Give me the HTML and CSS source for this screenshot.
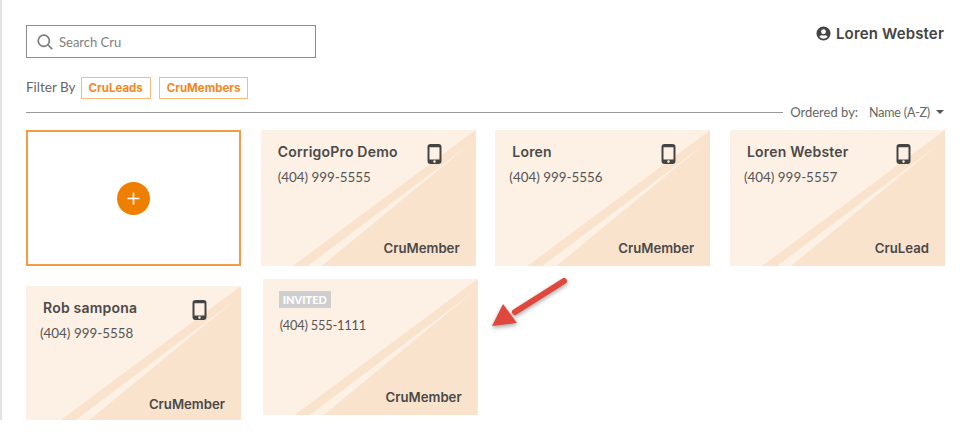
FILE: index.html
```html
<!DOCTYPE html>
<html lang="en">
<head>
    <meta charset="UTF-8">
    <meta name="viewport" content="width=device-width, initial-scale=1.0">
    <title>Cru</title>
    <link rel="stylesheet" href="styles.css">
</head>
<body>
    <div class="page">
        <div class="top-row">
            <div class="search">
                <svg class="search-icon" viewBox="0 0 16 16"><circle cx="6.8" cy="6.8" r="5.6"/><path d="M11 11l4.2 4.2"/></svg>
                <span>Search Cru</span>
            </div>
            <div class="user">
                <svg class="user-icon" viewBox="0 0 16 16"><path d="M8 .5a7.5 7.5 0 1 0 0 15 7.5 7.5 0 0 0 0-15zm0 3a2.6 2.6 0 1 1 0 5.2 2.6 2.6 0 0 1 0-5.2zm0 10a5.8 5.8 0 0 1-4.4-2c.5-1 1.500-1.700 2.600-1.700.4 0 1 .4 1.800.4s1.400-.4 1.800-.4c1.100 0 2.100.7 2.600 1.700a5.800 5.800 0 0 1-4.400 2z"/></svg>
                <span>Loren Webster</span>
            </div>
        </div>

        <div class="filter-row">
            <span class="filter-label">Filter By</span>
            <span class="chip">CruLeads</span>
            <span class="chip">CruMembers</span>
        </div>

        <div class="order-row">
            <div class="rule"></div>
            <span class="order-label">Ordered by:</span>
            <span class="order-value">Name (A-Z)</span>
            <span class="caret"></span>
        </div>

        <div class="cards">
            <div class="add-card"><span class="add-btn"><svg viewBox="0 0 12 12"><path d="M6 .5v11M.5 6h11"/></svg></span></div>

            <div class="card">
                <div class="card-head">
                    <span class="card-name">CorrigoPro Demo</span>
                    <svg class="phone-icon" viewBox="0 0 15 20"><use href="#phone"/></svg>
                </div>
                <p class="card-phone flush">(404) 999-5555</p>
                <span class="card-role">CruMember</span>
            </div>

            <div class="card">
                <div class="card-head">
                    <span class="card-name">Loren</span>
                    <svg class="phone-icon" viewBox="0 0 15 20"><use href="#phone"/></svg>
                </div>
                <p class="card-phone">(404) 999-5556</p>
                <span class="card-role">CruMember</span>
            </div>

            <div class="card">
                <div class="card-head">
                    <span class="card-name">Loren Webster</span>
                    <svg class="phone-icon" viewBox="0 0 15 20"><use href="#phone"/></svg>
                </div>
                <p class="card-phone">(404) 999-5557</p>
                <span class="card-role">CruLead</span>
            </div>

            <div class="card">
                <div class="card-head">
                    <span class="card-name">Rob sampona</span>
                    <svg class="phone-icon" viewBox="0 0 15 20"><use href="#phone"/></svg>
                </div>
                <p class="card-phone">(404) 999-5558</p>
                <span class="card-role">CruMember</span>
            </div>

            <div class="card invited">
                <div class="card-head"><span class="badge">INVITED</span></div>
                <p class="card-phone flush">(404) 555-1111</p>
                <span class="card-role">CruMember</span>
            </div>
        </div>
    </div>

    <!-- red annotation arrow -->
    <svg class="arrow" viewBox="0 0 90 60">
        <path class="arrow-line" d="M74 4L25 35"/>
        <path class="arrow-head" d="M2 49l11-22 14 19z"/>
    </svg>

    <svg class="defs" width="0" height="0">
        <symbol id="phone" viewBox="0 0 15 20">
            <path d="M3.500 0h8A3 3 0 0 1 14.500 3v14a3 3 0 0 1-3 3h-8a3 3 0 0 1-3-3V3a3 3 0 0 1 3-3zM2.500 3.200v12.300h10V3.200zM7.500 16.300a1.300 1.300 0 1 0 0 2.600 1.300 1.300 0 0 0 0-2.600z" fill-rule="evenodd"/>
        </symbol>
    </svg>
</body>
</html>
```

FILE: styles.css
```css
body {
    margin: 0;
    background-color: white;
    font-family: Lato, Arial, sans-serif;
    color: #555;
}
.page {
    height: 395px;
    padding: 25px 35px 0 24px;
    border-left: 2px solid #e2e2e2;
    overflow: hidden;
}
.top-row {
    display: flex;
    justify-content: space-between;
    align-items: flex-start;
}
.search {
    display: flex;
    align-items: center;
    gap: 6px;
    box-sizing: border-box;
    width: 290px;
    height: 33px;
    padding-left: 10px;
    border: 1.5px solid #8c8c8c;
    font-size: 13px;
    color: #808080;
}
.search-icon {
    width: 16px;
    height: 16px;
    fill: none;
    stroke: #7d7d7d;
    stroke-width: 1.700;
}
.user {
    display: flex;
    align-items: center;
    gap: 5px;
    margin: -1px 1px 0 0;
    font-family: Inter, Arial, sans-serif;
    font-size: 15px;
    font-weight: 600;
    letter-spacing: 0.150px;
    color: #444;
}
.user-icon {
    width: 15px;
    height: 15px;
    fill: #444;
}
.filter-row {
    display: flex;
    align-items: center;
    margin-top: 19px;
}
.filter-label {
    margin: -2px 5px 0 0;
    font-size: 13.500px;
    color: #666;
}
.chip {
    box-sizing: border-box;
    height: 22px;
    margin-right: 8px;
    padding: 0 7px;
    border: 1px solid #fbb97c;
    font-family: Inter, Arial, sans-serif;
    font-size: 11.500px;
    font-weight: 700;
    line-height: 21px;
    color: #f5871f;
}
.order-row {
    display: flex;
    align-items: center;
    margin-top: 2px;
    height: 22px;
    font-size: 13px;
    color: #666;
}
.rule {
    flex: 1;
    height: 1px;
    margin-right: 7px;
    background-color: #999;
}
.order-value {
    margin-left: 11px;
    font-size: 12.500px;
    letter-spacing: -0.200px;
}
.caret {
    margin-left: 6px;
    margin-right: 1px;
    border-left: 4px solid transparent;
    border-right: 4px solid transparent;
    border-top: 4px solid #555;
}
.cards {
    display: grid;
    grid-template-columns: repeat(4, 215px);
    grid-auto-rows: 136px;
    column-gap: 19.670px;
    row-gap: 20px;
    margin-top: 7px;
}
.add-card {
    display: flex;
    align-items: center;
    justify-content: center;
    border: 2px solid #f79a45;
    box-sizing: border-box;
}
.add-btn {
    display: flex;
    align-items: center;
    justify-content: center;
    width: 33px;
    height: 33px;
    border-radius: 50%;
    background-color: #ef7f00;
}
.add-btn svg {
    width: 13px;
    height: 13px;
    fill: none;
    stroke: white;
    stroke-width: 1.500;
}
.card {
    position: relative;
    padding: 0 16px 0 17px;
    background-color: #fdf0e5;
}
/* diagonal pattern on the card */
.card::before,
.card::after {
    content: "";
    position: absolute;
    inset: 0;
}
.card::before {
    background-color: #fae3cc;
    clip-path: polygon(100% 0, 100% 100%, 32px 100%);
}
.card::after {
    background-color: #fdf0e5;
    clip-path: polygon(47px 100%, 61px 100%, 208px 15px);
}
.card > * {
    position: relative;
    z-index: 1;
}
.card-head {
    display: flex;
    justify-content: space-between;
    align-items: flex-start;
    height: 33px;
    padding: 13px 18px 0 0;
}
.card-name {
    font-family: Inter, Arial, sans-serif;
    font-size: 14px;
    font-weight: 600;
    letter-spacing: 0.200px;
    color: #4a4a4a;
}
.phone-icon {
    width: 15px;
    height: 20px;
    margin-top: 1px;
    fill: #444;
    flex: none;
}
.card-phone {
    margin: -7px 0 0 -3px;
    font-size: 13.400px;
    color: #555;
}
.card-phone.flush {
    margin-left: 0;
}
.card-role {
    position: absolute;
    right: 16px;
    bottom: 10px;
    font-family: Inter, Arial, sans-serif;
    font-size: 13.200px;
    font-weight: 600;
    color: #4a4a4a;
}
.card.invited {
    margin: -7px -2px 7px 2px;
}
.invited .card-phone {
    margin-top: -8px;
    font-size: 12.800px;
    letter-spacing: -0.200px;
}
.badge {
    margin: -1px 0 0 -1px;
    padding: 2px 4px;
    background-color: #cfcfcf;
    font-size: 11px;
    font-weight: 900;
    color: white;
}
.arrow {
    position: absolute;
    left: 490px;
    top: 277px;
    width: 90px;
    height: 60px;
    filter: drop-shadow(0 2px 2px rgba(0, 0, 0, 0.35));
}
.arrow-line {
    fill: none;
    stroke: #e0483e;
    stroke-width: 6;
    stroke-linecap: round;
}
.arrow-head {
    fill: #e0483e;
}
.defs {
    position: absolute;
}
```
